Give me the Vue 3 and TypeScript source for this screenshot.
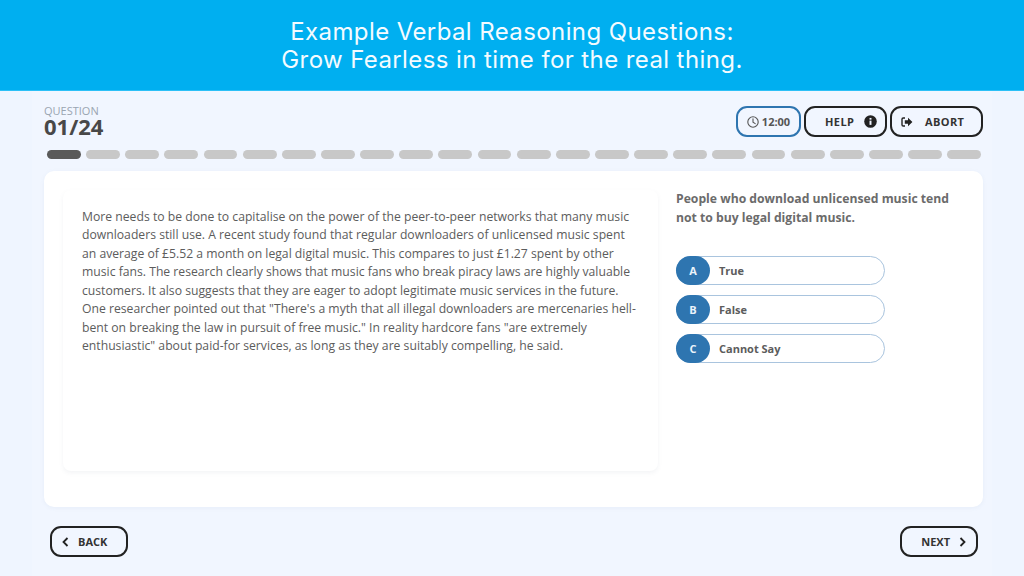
<script setup lang="ts">
const passage = `More needs to be done to capitalise on the power of the peer-to-peer networks that many music downloaders still use. A recent study found that regular downloaders of unlicensed music spent an average of £5.52 a month on legal digital music. This compares to just £1.27 spent by other music fans. The research clearly shows that music fans who break piracy laws are highly valuable customers. It also suggests that they are eager to adopt legitimate music services in the future. One researcher pointed out that "There's a myth that all illegal downloaders are mercenaries hell-bent on breaking the law in pursuit of free music." In reality hardcore fans "are extremely enthusiastic" about paid-for services, as long as they are suitably compelling, he said.`

const options = [
  ['A', 'True'],
  ['B', 'False'],
  ['C', 'Cannot Say'],
]

const total = 24
const current = 0
</script>

<template>
  <div class="page">
    <header class="banner">
      <h1>Example Verbal Reasoning Questions:<br>Grow Fearless in time for the real thing.</h1>
    </header>

    <main class="wrap">
      <div class="top">
        <div class="counter">
          <span class="counter-label">QUESTION</span>
          <span class="counter-num">01/24</span>
        </div>
        <div class="actions">
          <div class="btn timer">
            <svg width="12" height="12" viewBox="0 0 12 12" fill="none" stroke="#555" stroke-width="1.1">
              <circle cx="6" cy="6" r="5.2" />
              <path d="M6 2.8V6.2L8.2 7.6" stroke-linecap="round" />
            </svg>
            <span>12:00</span>
          </div>
          <div class="btn help">
            <span>HELP</span>
            <svg width="13" height="13" viewBox="0 0 12 12">
              <circle cx="6" cy="6" r="5.8" fill="#222" />
              <rect x="5.1" y="5.2" width="1.8" height="3.9" fill="#f0f5ff" />
              <rect x="5.1" y="2.7" width="1.8" height="1.6" fill="#f0f5ff" />
            </svg>
          </div>
          <div class="btn abort">
            <svg width="12" height="10" viewBox="0 0 12 10" fill="none">
              <path d="M4 1H2.2C1.4 1 1 1.5 1 2.2V7.8C1 8.5 1.4 9 2.2 9H4" stroke="#222" stroke-width="1.4" />
              <path d="M7 .8L11.4 5L7 9.2V6.8H3.8V3.2H7Z" fill="#222" />
            </svg>
            <span>ABORT</span>
          </div>
        </div>
      </div>

      <div class="progress">
        <span v-for="n in total" :key="n" class="pill" :class="{ active: n - 1 === current }"></span>
      </div>

      <section class="card">
        <div class="passage">
          <p>{{ passage }}</p>
        </div>
        <div class="question">
          <p class="statement">People who download unlicensed music tend not to buy legal digital music.</p>
          <div class="options">
            <div v-for="[letter, label] in options" :key="letter" class="option">
              <span class="letter">{{ letter }}</span>
              <span class="option-label">{{ label }}</span>
            </div>
          </div>
        </div>
      </section>

      <footer class="nav">
        <div class="btn nav-btn back">
          <svg width="7" height="10" viewBox="0 0 7 10" fill="none" stroke="#222" stroke-width="1.8">
            <path d="M5.5 1L1.5 5L5.5 9" />
          </svg>
          <span>BACK</span>
        </div>
        <div class="btn nav-btn next">
          <span>NEXT</span>
          <svg width="7" height="10" viewBox="0 0 7 10" fill="none" stroke="#222" stroke-width="1.8">
            <path d="M1.5 1L5.5 5L1.5 9" />
          </svg>
        </div>
      </footer>
    </main>
  </div>
</template>

<style>
html, body {
  margin: 0;
  background: #f0f5ff;
}
</style>

<style scoped>
.page {
  width: 1024px;
  height: 576px;
  overflow: hidden;
  background: #eff5ff;
  font-family: "Open Sans", "Liberation Sans", sans-serif;
}

.banner {
  box-sizing: border-box;
  height: 91px;
  padding-top: 2px;
  background: #00aff0;
  border-bottom: 1px solid #2cc0f7;
  display: flex;
  align-items: center;
  justify-content: center;
}

.banner h1 {
  margin: 0;
  font-family: Inter, "Open Sans", sans-serif;
  font-weight: 400;
  font-size: 24px;
  line-height: 28px;
  letter-spacing: .4px;
  color: #f4fbff;
  text-align: center;
}

.wrap {
  box-sizing: border-box;
  width: 960px;
  height: 485px;
  margin-left: 32px;
  padding: 0 9px 0 12px;
  background: #f1f6ff;
}

.top {
  height: 59px;
  display: flex;
  justify-content: space-between;
  align-items: flex-start;
}

.counter {
  display: flex;
  flex-direction: column;
  padding-top: 13px;
}

.counter-label {
  font-size: 11px;
  line-height: 13px;
  color: #9aa5b1;
}

.counter-num {
  font-size: 22px;
  line-height: 18px;
  font-weight: 700;
  color: #484848;
}

.actions {
  display: flex;
  gap: 3px;
  padding-top: 15px;
}

.btn {
  box-sizing: border-box;
  height: 31px;
  border: 2px solid #222;
  border-radius: 11px;
  display: flex;
  align-items: center;
  font-size: 11px;
  font-weight: 700;
  letter-spacing: .4px;
  color: #333;
}

.timer {
  width: 65px;
  border-color: #2e75b0;
  justify-content: center;
  gap: 3px;
  color: #555;
  letter-spacing: 0;
}

.help {
  width: 83px;
  padding-left: 19px;
  gap: 10px;
}

.abort {
  width: 93px;
  padding-left: 9px;
  gap: 12px;
}

.progress {
  display: flex;
  gap: 5.25px;
  padding-left: 3px;
  height: 21px;
}

.pill {
  width: 33.9px;
  height: 9px;
  border-radius: 5px;
  background: #c8c8c8;
}

.pill.active {
  background: #5a5a5a;
}

.card {
  box-sizing: border-box;
  height: 336px;
  background: #fff;
  border-radius: 10px;
  box-shadow: 0 1px 4px rgba(120, 140, 180, .08);
  display: flex;
  padding: 19px 0 36px 19px;
}

.passage {
  box-sizing: border-box;
  width: 595px;
  height: 281px;
  padding: 18px 19px;
  border-radius: 8px;
  box-shadow: 0 2px 4px rgba(120, 130, 160, .09);
}

.passage p {
  margin: 0;
  font-size: 12.2px;
  line-height: 18.45px;
  color: #5c5c5c;
}

.question {
  margin-left: 18px;
  width: 285px;
  margin-top: -1px;
}

.statement {
  margin: 0;
  font-size: 12.2px;
  line-height: 19px;
  font-weight: 700;
  color: #6b6b6b;
}

.options {
  margin-top: 29px;
  display: flex;
  flex-direction: column;
  gap: 10px;
}

.option {
  box-sizing: border-box;
  width: 209px;
  height: 29px;
  border: 1px solid #a9c4de;
  border-radius: 15px;
  display: flex;
  align-items: center;
  background: #fff;
}

.letter {
  width: 34px;
  height: 29px;
  margin-left: -1px;
  border-radius: 15px;
  background: #2e75b0;
  color: #eaf3fb;
  font-size: 11px;
  font-weight: 700;
  display: flex;
  align-items: center;
  justify-content: center;
  flex-shrink: 0;
}

.option-label {
  margin-left: 9px;
  font-size: 11px;
  font-weight: 700;
  color: #5c5c5c;
}

.nav {
  display: flex;
  justify-content: space-between;
  padding: 19px 5px 0 6px;
}

.nav-btn {
  width: 78px;
  letter-spacing: 0;
}

.back {
  padding-left: 10px;
  gap: 9px;
}

.next {
  justify-content: flex-end;
  padding-right: 10px;
  gap: 9px;
}
</style>
